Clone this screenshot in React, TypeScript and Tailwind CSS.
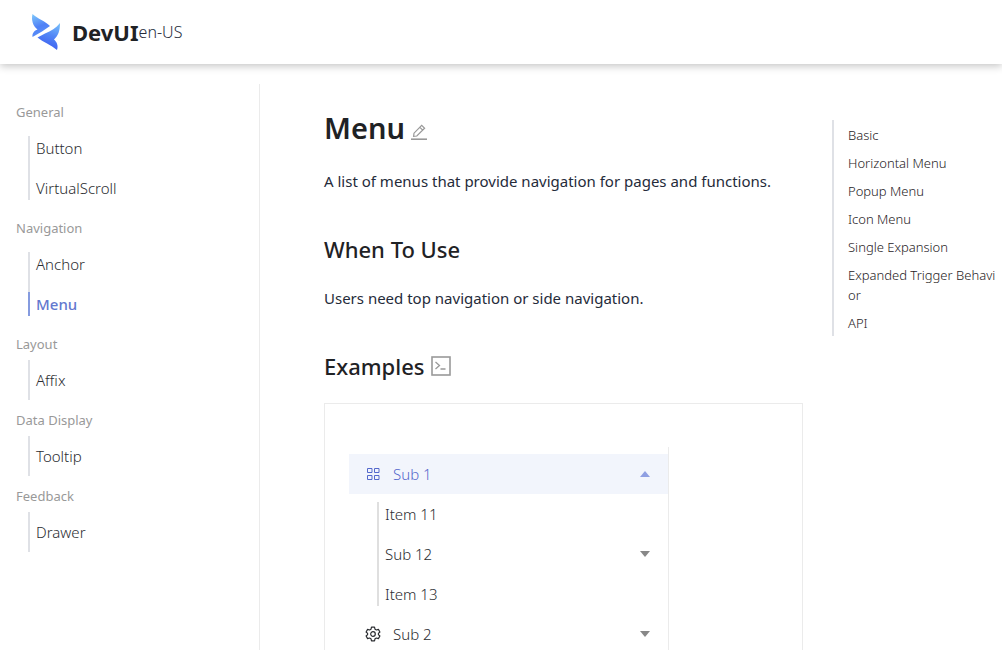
import React from 'react';
import clsx from 'clsx';

const sidebar = [
  { title: 'General', items: ['Button', 'VirtualScroll'] },
  { title: 'Navigation', items: ['Anchor', 'Menu'] },
  { title: 'Layout', items: ['Affix'] },
  { title: 'Data Display', items: ['Tooltip'] },
  { title: 'Feedback', items: ['Drawer'] },
];

const anchors = [
  'Basic',
  'Horizontal Menu',
  'Popup Menu',
  'Icon Menu',
  'Single Expansion',
  'Expanded Trigger Behavior',
  'API',
];

const Logo: React.FC = () => (
  <svg className="h-9 w-8" viewBox="0 0 32 36" aria-hidden="true">
    <defs>
      <linearGradient id="wingTop" x1="0.2" y1="0" x2="0.5" y2="1">
        <stop offset="0" stopColor="#7cc4fb" />
        <stop offset="0.55" stopColor="#4f80f6" />
        <stop offset="1" stopColor="#5b92f8" />
      </linearGradient>
      <linearGradient id="wingBottom" x1="0.9" y1="0" x2="0.6" y2="1">
        <stop offset="0" stopColor="#78c0fb" />
        <stop offset="0.5" stopColor="#5286f6" />
        <stop offset="1" stopColor="#3d5ff0" />
      </linearGradient>
    </defs>
    <path d="M2.500 0C8 5 15 7 20 12L12 17.500 2.500 23C2 19 4.500 16.500 7.500 15.500C3 12 1 6 2.500 0Z" fill="url(#wingTop)" />
    <path d="M30 9C30 17 28 22 24 25.500C27 28 28.500 32 27 36C21 31 13 28 7.500 23.500L15 19.500C21 17 26 14 30 9Z" fill="url(#wingBottom)" />
  </svg>
);

const EditIcon: React.FC = () => (
  <svg className="size-4" viewBox="0 0 16 16" fill="none" stroke="#999" strokeWidth="1.2" aria-hidden="true">
    <path d="M2.600 12.400 3 9.200 10.700 1.400 13.600 4.200 5.800 12Z M8.900 3.300 11.700 6.100" />
    <path d="M0 15.200H16" strokeWidth="1.600" />
  </svg>
);

const TerminalIcon: React.FC = () => (
  <svg className="size-5" viewBox="0 0 20 20" fill="none" stroke="#999" aria-hidden="true">
    <rect x="1" y="1" width="18" height="18" strokeWidth="1.6" />
    <path d="M4.5 6 8.5 9.5 4.5 13 M9.5 13H14.5" strokeWidth="1.3" />
  </svg>
);

const GridIcon: React.FC = () => (
  <svg className="size-4" viewBox="0 0 16 16" fill="none" stroke="currentColor" aria-hidden="true">
    <path d="M2.500 2.500h4.500v4h-4.500zM9.500 2.500h4.500v4h-4.500zM2.500 9.500h4.500v4h-4.500zM9.500 9.500h4.500v4h-4.500z" />
  </svg>
);

const GearIcon: React.FC = () => (
  <svg
    className="size-4"
    viewBox="0 0 16 16"
    fill="none"
    stroke="currentColor"
    strokeWidth="1.2"
    strokeLinejoin="round"
    aria-hidden="true"
  >
    <path d="M6.500 1.200h3l.5 2 1.400.8 2-.6 1.500 2.600-1.500 1.400v1.200l1.500 1.400-1.500 2.600-2-.6-1.400.8-.5 2h-3l-.5-2-1.400-.8-2 .6L1.100 10l1.500-1.400V7.400L1.100 6l1.500-2.600 2 .6L6 3.200z" />
    <circle cx="8" cy="8" r="2.300" />
  </svg>
);

const Caret: React.FC<{ up?: boolean }> = ({ up }) => (
  <svg className="h-1.5 w-2.5" viewBox="0 0 10 6" fill="currentColor" aria-hidden="true">
    {up ? <path d="M5 0 10 6H0Z" /> : <path d="M0 0H10L5 6Z" />}
  </svg>
);

export default function App() {
  return (
    <div className="flex h-screen flex-col overflow-hidden bg-white font-['Noto_Sans','Open_Sans',sans-serif] font-light text-[#252b3a]">
      <header className="z-10 flex h-16 shrink-0 items-center bg-white pl-[30px] shadow-[0_2px_8px_rgba(0,0,0,0.24)]">
        <a href="#home" className="flex items-center gap-2.5 text-[22px] font-bold text-[#1f2225]">
          <Logo />
          DevUI
        </a>
        <a href="#en-US" className="text-base">en-US</a>
      </header>

      <div className="flex min-h-0 flex-1">
        <nav className="mt-5 w-[260px] shrink-0 border-r border-[#ebebeb] pt-3 pl-4">
          {sidebar.map((group) => (
            <section key={group.title}>
              <h4 className="text-[13px] leading-8 font-normal text-[#999]">{group.title}</h4>
              <ul className={clsx('mb-1 ml-3', group.items.length > 1 && 'py-2')}>
                {group.items.map((item, i) => (
                  <li
                    key={item}
                    className={clsx(
                      'border-l-2 pl-1.5',
                      item === 'Menu' ? 'border-[#859bdf]' : 'border-[#dfe1e6]',
                      group.items.length === 1 && 'py-2',
                      i < group.items.length - 1 && 'pb-4'
                    )}
                  >
                    <a
                      href={`#${item}`}
                      className={clsx(
                        'block text-[15px] leading-6',
                        item === 'Menu' ? 'font-medium text-[#6378cf]' : 'text-[#2b2d31]'
                      )}
                    >
                      {item}
                    </a>
                  </li>
                ))}
              </ul>
            </section>
          ))}
        </nav>

        <main className="min-w-0 flex-1 pt-11 pl-16">
          <h1 className="flex items-center gap-1.5 text-[29px] leading-10 font-semibold text-[#1f2225]">
            Menu
            <a href="#edit" aria-label="Edit this page" className="pt-2">
              <EditIcon />
            </a>
          </h1>
          <p className="mt-[21px] text-[15px] leading-6 font-normal">
            A list of menus that provide navigation for pages and functions.
          </p>
          <h2 className="mt-10 text-[22px] leading-8 font-medium text-[#1f2225]">When To Use</h2>
          <p className="mt-[21px] text-[15px] leading-6 font-normal">
            Users need top navigation or side navigation.
          </p>
          <h2 className="mt-10 flex items-center gap-1.5 text-[22px] leading-8 font-medium text-[#1f2225]">
            Examples
            <button type="button" aria-label="Show code">
              <TerminalIcon />
            </button>
          </h2>

          <div className="mt-[21px] border border-[#ebebeb] px-6 pt-[43px]">
            <ul className="h-[420px] max-w-80 border-r border-[#ebebeb] pt-[7px] text-[15px] text-[#2b2d31]">
              <li>
                <button
                  type="button"
                  className="flex h-10 w-full items-center bg-[#f2f5fc] pr-[18px] pl-4 text-[#5468cc]"
                >
                  <GridIcon />
                  <span className="ml-3 flex-1 text-left">Sub 1</span>
                  <span className="text-[#8f9fe2]"><Caret up /></span>
                </button>
                <ul className="mt-2 ml-7 border-l-2 border-[#dfdfdf] pl-1.5">
                  <li className="pb-4 leading-6">Item 11</li>
                  <li className="pb-4">
                    <button type="button" className="flex h-6 w-full items-center justify-between pr-[18px]">
                      Sub 12
                      <span className="text-[#888]"><Caret /></span>
                    </button>
                  </li>
                  <li className="leading-6">Item 13</li>
                </ul>
              </li>
              <li className="mt-2">
                <button type="button" className="flex h-10 w-full items-center pr-[18px] pl-4">
                  <GearIcon />
                  <span className="ml-3 flex-1 text-left">Sub 2</span>
                  <span className="text-[#888]"><Caret /></span>
                </button>
              </li>
            </ul>
          </div>
        </main>

        <aside className="mt-14 ml-[29px] w-[170px] shrink-0">
          <ul className="border-l-2 border-[#dfe1e6] pl-3.5 text-[13px] leading-5 text-[#1f2225]">
            {anchors.map((anchor) => (
              <li key={anchor} className="pt-[5px] pb-[3px]">
                <a href={`#${anchor}`} className="block break-all">{anchor}</a>
              </li>
            ))}
          </ul>
        </aside>
      </div>
    </div>
  );
}
